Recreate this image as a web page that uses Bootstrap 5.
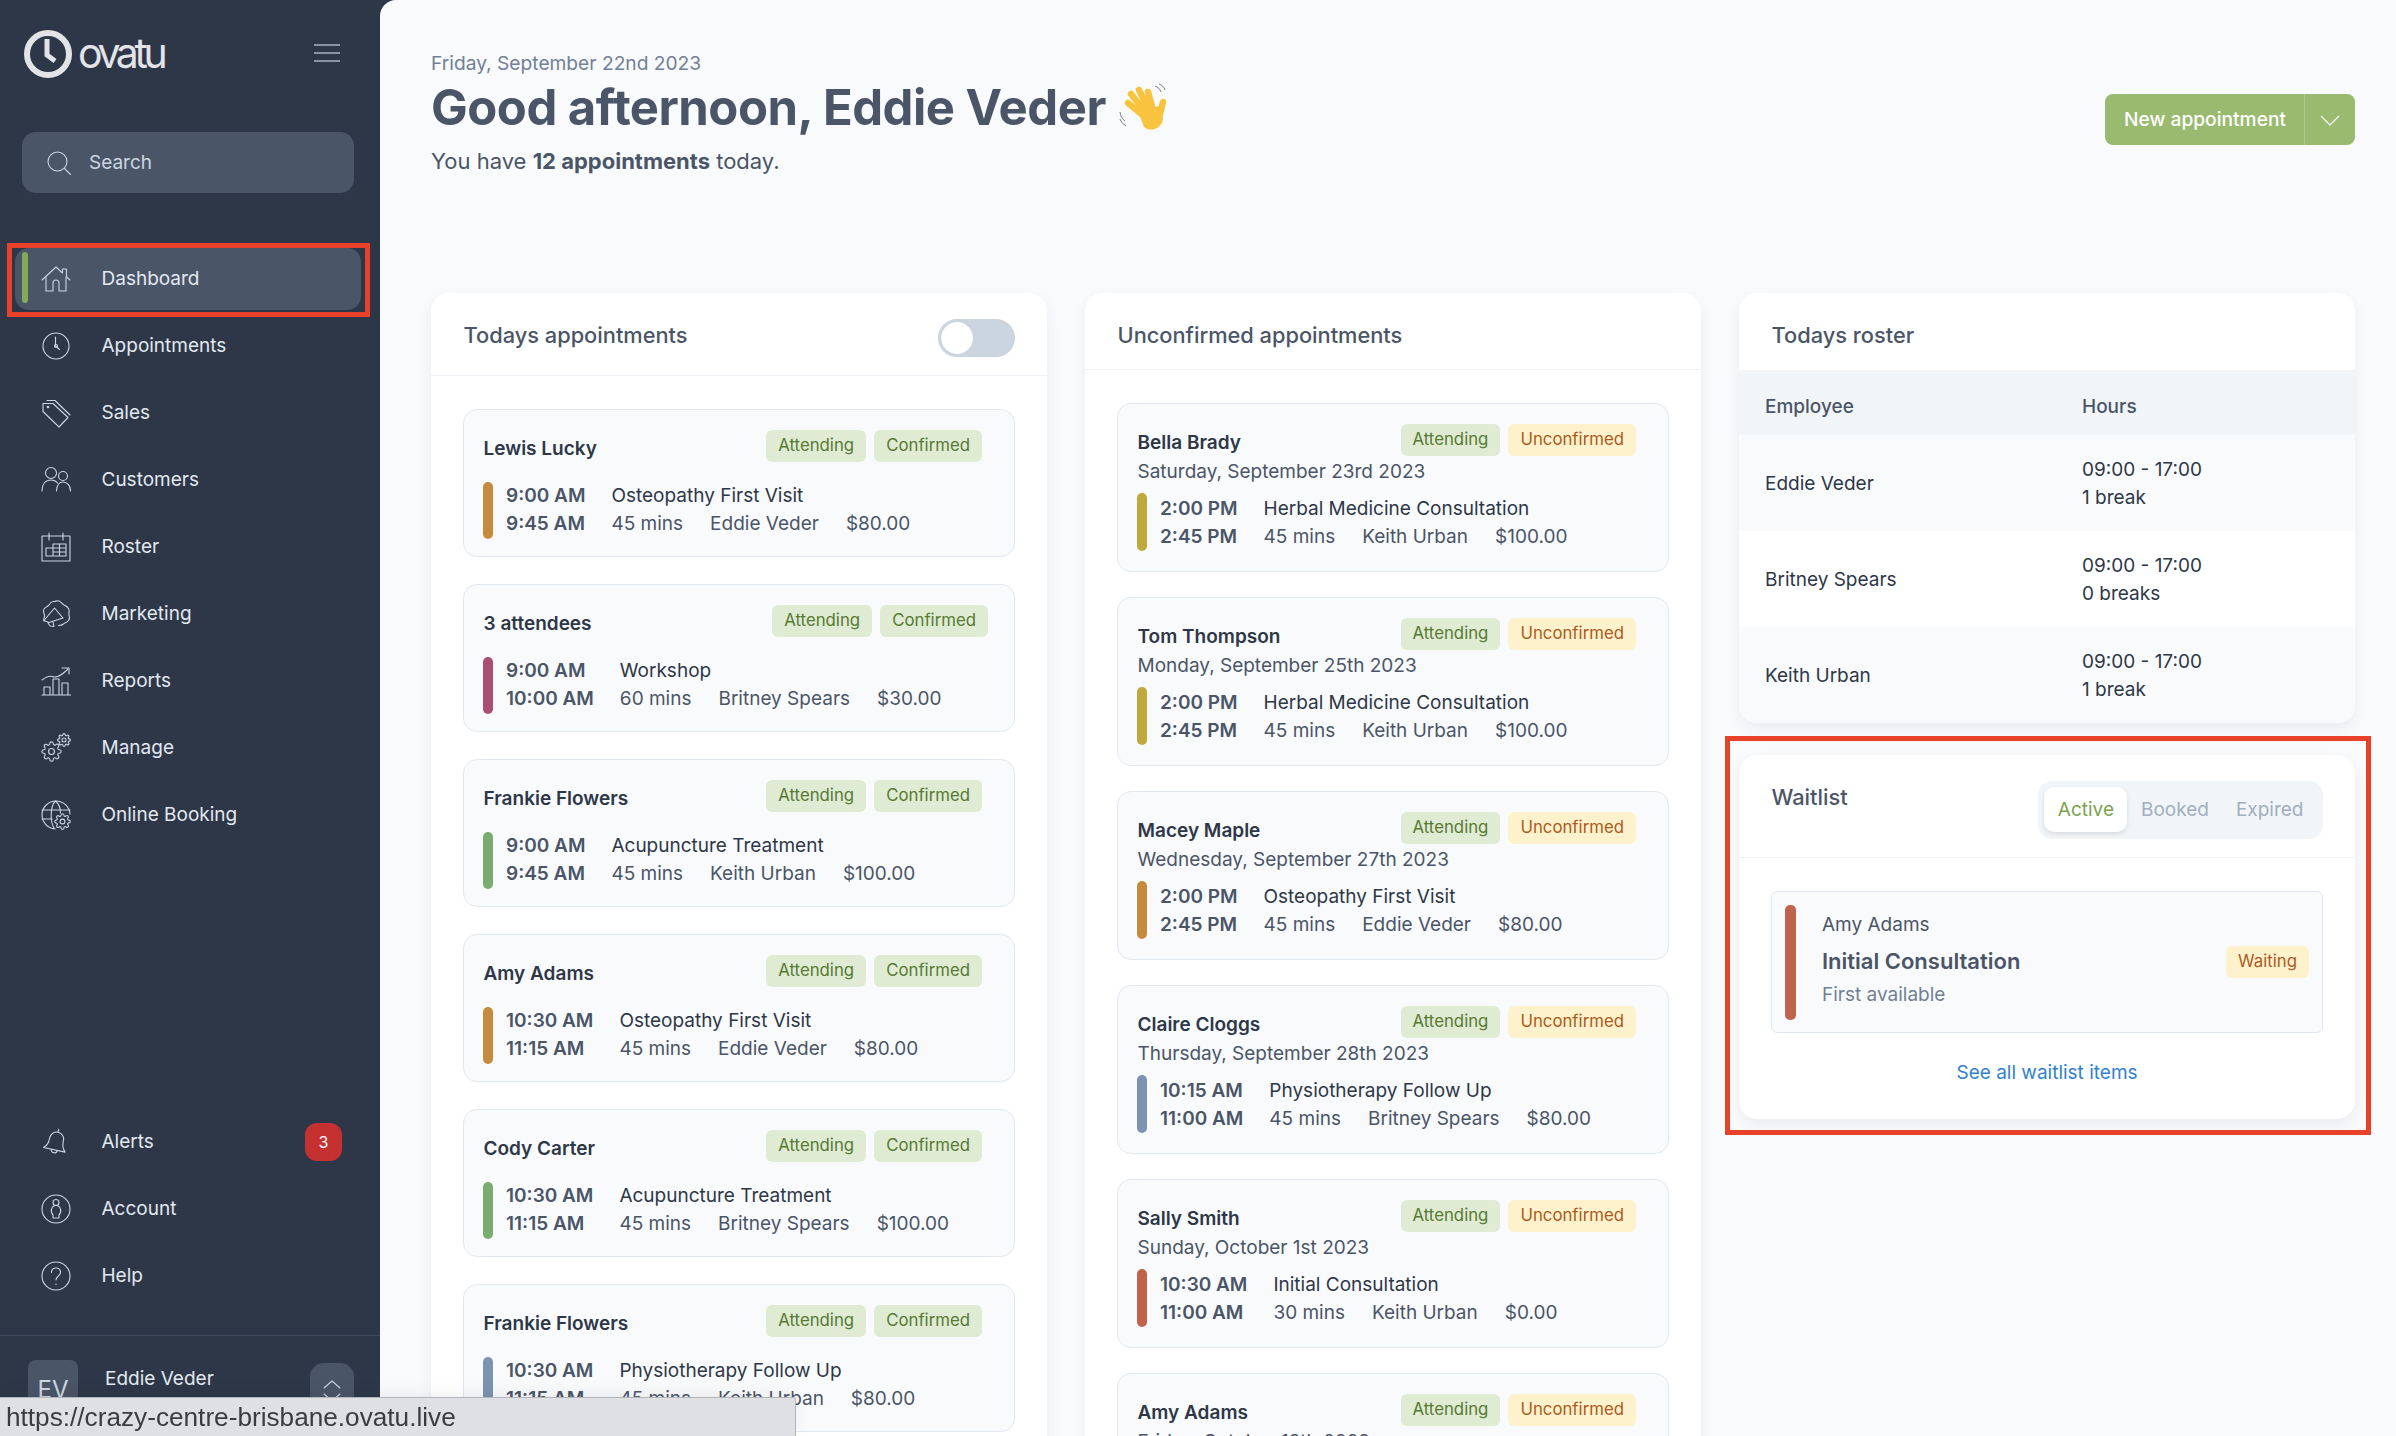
<!DOCTYPE html>
<html lang="en">
<head>
  <meta charset="UTF-8">
  <title>Dashboard – Ovatu</title>
  <meta name="viewport" content="width=device-width, initial-scale=1" />
  <link href="https://cdn.jsdelivr.net/npm/bootstrap@5.3.0/dist/css/bootstrap.min.css" rel="stylesheet" />
  <style>
    html, body { height: 100%; overflow: hidden; }
    body {
      background-color: #2d3748;
      font-family: Inter, "Liberation Sans", sans-serif;
      font-size: 19px;
      color: #4a5568;
    }

    .app-shell { height: 1436px; }

    /* sidebar */
    .side-bar { width: 380px; flex: 0 0 380px; color: #e2e8f0; padding: 0 0 0 15px; }
    .logo-row { height: 132px; padding: 30px 40px 0 9px; align-items: flex-start; }
    .logo-word { font-size: 41px; line-height: 46px; letter-spacing: -4.4px; color: #e2e4e8; margin-left: 6px; margin-top: 0; }
    .burger { margin-top: 14px; }
    .search-box { margin: 0 26px 0 7px; height: 61px; background: #4a5568; border-radius: 14px; padding-left: 25px; color: #cbd5e0; }
    .search-box span { margin-left: 18px; padding-top: 1px; }
    .side-list { margin-top: 55px; }
    .side-link { position: relative; height: 62px; margin: 0 19px 5px 0; padding-left: 26px; border-radius: 14px; color: #e2e8f0; text-decoration: none; }
    .side-link.is-on { background: #4a5568; }
    .side-link.is-on::before { content: ""; position: absolute; left: 7px; top: 4px; bottom: 7px; width: 6px; border-radius: 3px; background: #84a957; }
    .side-link svg { width: 30px; height: 30px; flex: none; margin-right: 30.5px; }
    .ico { fill: none; stroke: #cbd5e0; stroke-width: 1.1; stroke-linecap: round; stroke-linejoin: round; }
    .alert-pill { margin-left: auto; margin-right: 19px; width: 37px; height: 38px; border-radius: 12px; background: #c53030; color: #fff; font-size: 16px; }
    .side-foot { margin-left: -15px; margin-top: 23px; border-top: 1px solid #3f4a5c; padding: 24px 26px 13px 28px; }
    .avatar-box { width: 50px; height: 60px; background: #4a5568; border-radius: 8px; font-size: 24px; color: #cbd5e0; padding-top: 12px; text-align: center; }
    .user-name { margin-left: 27px; margin-top: 5px; }
    .user-switch { margin-left: auto; margin-top: 3px; width: 44px; height: 60px; background: #4a5568; border-radius: 14px; padding-top: 13px; }

    /* main */
    .main-area { flex: 1 1 auto; min-width: 0; background: #f9fafc; border-top-left-radius: 16px; padding: 50px 41px 0 51px; }
    .page-date { font-size: 19.2px; line-height: 26px; color: #718096; }
    .page-title { font-size: 49px; line-height: 62px; font-weight: 700; color: #4a5568; margin: 1px 0 -1px; letter-spacing: -.5px; }
    .wave-hand { margin-left: 12px; }
    .page-sub { font-size: 22px; line-height: 30px; margin-top: 8px; }
    .page-sub b { font-weight: 700; }
    .new-btn { background: #9abb6f; border: 0; color: #fff; font-size: 19.2px; height: 51px; border-radius: 8px; padding: 0; width: 200px; font-weight: 500; }
    .new-btn:hover, .new-btn:focus { background: #8aae5c; color: #fff; }
    .new-btn-caret { border-left: 1px solid #afc98e; width: 51px; }
    .head-row { height: 243px; }
    .head-action { margin-top: 44px; }

    .cols { gap: 38px; }
    .cols > * { width: 616px; flex: none; }
    .panel { background: #fff; border-radius: 18px; box-shadow: 0 6px 14px rgba(45,55,72,.07); }
    .panel-head { padding: 0 32.5px; height: 77px; font-size: 21.8px; font-weight: 500; border-bottom: 1px solid #edf2f7; padding-top: 25px; line-height: 34px; }
    .panel-head.with-toggle { height: 83px; }
    .panel-head.no-line { border-bottom: 0; }
    .panel-body { padding: 33px 32px; }
    .day-toggle.form-check-input { width: 77px; height: 38px; margin: 1px 0 0 0; background-color: #cbd5e0; border: 3px solid #cbd5e0; background-image: url("data:image/svg+xml,%3csvg xmlns='http://www.w3.org/2000/svg' viewBox='-4 -4 8 8'%3e%3ccircle r='4' fill='%23fff'/%3e%3c/svg%3e"); float: none; }

    .appt { background: #f9fafc; border: 1px solid #e2e8f0; border-radius: 14px; padding: 20px 32px 18px 19.5px; height: 148px; margin-bottom: 27px; }
    .appt.has-date { height: 169px; margin-bottom: 25px; }
    .appt-name { font-weight: 600; color: #2d3748; line-height: 28px; margin-top: 5px; }
    .appt-date { line-height: 28px; margin-top: 1px; }
    .tag-row { display: flex; gap: 8px; }
    .tag-pill { display: inline-block; height: 32px; line-height: 31px; padding: 0 12px; border-radius: 6px; font-size: 16.8px; }
    .tag-green { background: #e0ebd3; color: #577a33; }
    .tag-amber { background: #fdf2cc; color: #ad5a21; }
    .appt-tags-wide { margin-right: -6px; }
    .appt-line { margin-top: 19px; margin-left: -.5px; }
    .has-date .appt-line { margin-top: 7px; }
    .time-bar { width: 10px; height: 57px; border-radius: 5px; margin-right: 13px; flex: none; }
    .has-date .time-bar { height: 58px; }
    .bar-orange { background: #c58a3e; }
    .bar-plum { background: #a94f72; }
    .bar-green { background: #7aac70; }
    .bar-slate { background: #7c93b2; }
    .bar-mustard { background: #bfa93a; }
    .bar-terra { background: #c0634a; }
    .bar-rust { background: #c0654d; }
    .time-col { font-weight: 600; line-height: 28px; margin-right: 26px; white-space: nowrap; }
    .info-col { line-height: 28px; white-space: nowrap; color: #4a5568; }
    .has-date .time-col, .has-date .info-col { padding-top: 2px; }
    .info-title { color: #2d3748; }
    .info-col span + span { margin-left: 27px; }

    .roster-table { margin: 0; font-size: 19px; }
    .roster-table th, .roster-table td { padding: 0 0 0 26px; vertical-align: middle; border: 0; color: #2d3748; background: transparent; line-height: 28px; }
    .roster-table th { height: 65px; padding-top: 9px; background: #f2f5f8; font-weight: 500; color: #4a5568; }
    .roster-table td { height: 96px; padding-top: 2px; }
    .roster-table tbody tr:nth-child(odd) td { background: #f9fafc; }
    .roster-table .first-col { width: 317px; }
    .panel-clip { overflow: hidden; }

    .wait-panel { margin-top: 32px; }
    .wait-head { height: 103px; padding: 25px 32px 0 32.5px; border-bottom: 1px solid #edf2f7; font-size: 21.8px; font-weight: 500; }
    .wait-title { line-height: 34px; }
    .wait-tabs { height: 58px; background: #f2f5f8; border-radius: 14px; padding: 6px; margin-top: 1px; font-size: 19px; font-weight: 400; }
    .wait-tab { height: 45px; line-height: 45px; padding: 0 13.5px; border-radius: 10px; color: #a0aec0; text-decoration: none; }
    .wait-tab.is-on { background: #fff; color: #7ba34f; box-shadow: 0 2px 4px rgba(45,55,72,.14); }
    .wait-item { background: #f9fafc; border: 1px solid #e2e8f0; border-radius: 6px; height: 142px; padding: 13px; }
    .wait-bar { width: 11px; height: 115px; border-radius: 5px; margin-right: 26px; flex: none; }
    .wait-who { line-height: 28px; margin-top: 6px; }
    .wait-what { font-size: 22px; font-weight: 600; line-height: 30px; margin-top: 7px; }
    .wait-when { color: #718096; line-height: 28px; margin-top: 5px; }
    .wait-link { display: block; text-align: center; color: #3182ce; text-decoration: none; margin-top: 26px; padding-bottom: 32px; line-height: 28px; }

    /* overlays */
    .note-box { position: absolute; border: 5px solid #e8412a; pointer-events: none; }
    .note-dash { left: -8px; right: -9px; top: -5px; bottom: -7px; }
    .note-wait { left: -14px; right: -16px; top: -19px; bottom: -16px; }
    .url-tip { position: fixed; left: 0; bottom: 0; width: 796px; height: 39px; background: #dfe0e4; border-top: 1px solid #b4b5b8; border-right: 1px solid #b4b5b8; border-top-right-radius: 3px; font-family: "Liberation Sans", sans-serif; font-size: 26.2px; line-height: 38px; color: #3c3c3e; padding-left: 6px; box-shadow: 0 -4px 16px rgba(0,0,0,.06); }
  </style>
</head>
<body>
<svg width="0" height="0" class="position-absolute">
  <symbol id="gear" viewBox="0 0 24 24">
    <path d="M19.4 15a1.65 1.65 0 0 0 .33 1.82l.06.06a2 2 0 0 1 0 2.83 2 2 0 0 1-2.83 0l-.06-.06a1.65 1.65 0 0 0-1.82-.33 1.65 1.65 0 0 0-1 1.51V21a2 2 0 0 1-2 2 2 2 0 0 1-2-2v-.09A1.65 1.65 0 0 0 9 19.4a1.65 1.65 0 0 0-1.82.33l-.06.06a2 2 0 0 1-2.83 0 2 2 0 0 1 0-2.83l.06-.06a1.65 1.65 0 0 0 .33-1.82 1.65 1.65 0 0 0-1.51-1H3a2 2 0 0 1-2-2 2 2 0 0 1 2-2h.09A1.65 1.65 0 0 0 4.6 9a1.65 1.65 0 0 0-.33-1.82l-.06-.06a2 2 0 0 1 0-2.83 2 2 0 0 1 2.83 0l.06.06a1.65 1.65 0 0 0 1.82.33H9a1.65 1.65 0 0 0 1-1.51V3a2 2 0 0 1 2-2 2 2 0 0 1 2 2v.09a1.65 1.65 0 0 0 1 1.51 1.65 1.65 0 0 0 1.82-.33l.06-.06a2 2 0 0 1 2.83 0 2 2 0 0 1 0 2.83l-.06.06a1.65 1.65 0 0 0-.33 1.82V9a1.65 1.65 0 0 0 1.51 1H21a2 2 0 0 1 2 2 2 2 0 0 1-2 2h-.09a1.65 1.65 0 0 0-1.51 1z" vector-effect="non-scaling-stroke"/>
    <circle cx="12" cy="12" r="3.4" vector-effect="non-scaling-stroke"/>
  </symbol>
</svg>

<div class="app-shell d-flex">
  <aside class="side-bar d-flex flex-column">
    <div class="logo-row d-flex">
      <svg width="48" height="48" viewBox="0 0 48 48" fill="none" stroke="#e2e4e8">
        <circle cx="24" cy="24" r="21" stroke-width="6"/>
        <path d="M23 9v16l8 6" stroke-width="5" stroke-linejoin="miter"/>
      </svg>
      <span class="logo-word">ovatu</span>
      <svg class="burger ms-auto" width="26" height="18" viewBox="0 0 26 18" stroke="#a9b2c0" stroke-width="1.5"><path d="M0 1h26M0 9h26M0 17h26"/></svg>
    </div>

    <div class="search-box d-flex align-items-center">
      <svg width="24" height="24" viewBox="0 0 24 24" class="ico"><circle cx="10.5" cy="10.5" r="9.5"/><path d="M17.5 17.5l6 6"/></svg>
      <span>Search</span>
    </div>

    <nav class="side-list">
      <a class="side-link is-on d-flex align-items-center" href="#">
        <svg viewBox="0 0 30 30" class="ico"><path d="M1 16L15 3l6.500 6V5h4v8l3.500 3"/><path d="M5 13v14h7v-8c0-4 6-4 6 0v8h7V13"/></svg>
        Dashboard
        <span class="note-box note-dash"></span>
      </a>
      <a class="side-link d-flex align-items-center" href="#">
        <svg viewBox="0 0 30 30" class="ico"><circle cx="15" cy="15" r="13"/><path d="M14.500 6v9l4 3.500"/><circle cx="15" cy="15" r="1.500"/></svg>
        Appointments
      </a>
      <a class="side-link d-flex align-items-center" href="#">
        <svg viewBox="0 0 30 30" class="ico"><path d="M2 5.500h10L27 19.500 18 29 2 13.500z"/><path d="M6 2.500h8L29 17"/><circle cx="7" cy="9" r=".8"/></svg>
        Sales
      </a>
      <a class="side-link d-flex align-items-center" href="#">
        <svg viewBox="0 0 30 30" class="ico"><circle cx="10" cy="8" r="5.500"/><circle cx="22" cy="11" r="4.500"/><path d="M1 26c0-7 3.500-11 9-11 3 0 5 1 6.500 3"/><path d="M15.500 26c.3-5.500 2.500-9 6.500-9s7.500 3.500 7.500 9"/></svg>
        Customers
      </a>
      <a class="side-link d-flex align-items-center" href="#">
        <svg viewBox="0 0 30 30" class="ico"><rect x="1" y="4" width="28" height="25"/><path d="M8 1v7M22 1v7"/><path d="M12 12h13v8H12zM5 16h20M5 16v8h20v-12M12 12v12M18.500 12v12"/></svg>
        Roster
      </a>
      <a class="side-link d-flex align-items-center" href="#">
        <svg viewBox="0 0 30 30" class="ico"><path d="M3 22C2 20 4 18 3.500 16S1.500 12 3 10s3-2 4.500-3.500S10 2 12.500 2.500 15.500 1 18 2s3 3 5 4 4.500 2 5 4.500-.5 3.500 0 5.500 1.500 3-.5 5.500-3.500 2-5 3.500-3 1.500-5 1.500"/><path d="M13.500 9l8.500 10-14 4.500-5-2zM7 24l2 3 4 .5-1-4.500"/></svg>
        Marketing
      </a>
      <a class="side-link d-flex align-items-center" href="#">
        <svg viewBox="0 0 30 30" class="ico"><path d="M1 29h29M3 29v-8h6v8M12 29V13h6v16M21 29V17h6v12"/><path d="M1 14c4-3 7-4.500 10-3.500s7 1.500 16-7.500"/><path d="M21 2h7v6"/></svg>
        Reports
      </a>
      <a class="side-link d-flex align-items-center" href="#">
        <svg viewBox="0 0 30 30" class="ico"><use href="#gear" x="0" y="8" width="21" height="21"/><use href="#gear" x="16" y="0" width="14" height="14"/></svg>
        Manage
      </a>
      <a class="side-link d-flex align-items-center" href="#">
        <svg viewBox="0 0 30 30" class="ico"><path d="M14 28.900A14 14 0 1 1 29 14"/><path d="M1 10h28M1 19h10M14.500 1C9 6 9 22 13 28M14.500 1C18 4 19.500 9 19.500 13"/><use href="#gear" x="13" y="13" width="17" height="17"/></svg>
        Online Booking
      </a>
    </nav>

    <nav class="side-list mt-auto">
      <a class="side-link d-flex align-items-center" href="#">
        <svg viewBox="0 0 30 30" class="ico"><g transform="rotate(12 15 15)"><path d="M4 23c3-3 4-5 4-11a7 7 0 0 1 14 0c0 6 1 8 4 11z"/><path d="M15 5V2M12 23c0 4 6 4 6 0"/></g></svg>
        Alerts
        <span class="alert-pill d-flex align-items-center justify-content-center">3</span>
      </a>
      <a class="side-link d-flex align-items-center" href="#">
        <svg viewBox="0 0 30 30" class="ico"><circle cx="15" cy="15" r="14"/><circle cx="15" cy="8.500" r="3"/><path d="M12 24v-3c-3-3-2-9.500 3-9.500s6 6.500 3 9.500v3z"/></svg>
        Account
      </a>
      <a class="side-link d-flex align-items-center" href="#">
        <svg viewBox="0 0 30 30" class="ico"><circle cx="15" cy="15" r="14"/><path d="M10.500 11.500c0-6 9-6 9 0 0 3.500-4.500 3.500-4.500 7.500M15 23v.6"/></svg>
        Help
      </a>
    </nav>

    <div class="side-foot d-flex">
      <div class="avatar-box">EV</div>
      <div class="user-name">Eddie Veder</div>
      <div class="user-switch text-center">
        <svg width="18" height="24" viewBox="0 0 18 24" class="ico"><path d="M1 9l8-7 8 7M1 15l8 7 8-7"/></svg>
      </div>
    </div>
  </aside>

  <main class="main-area">
    <div class="head-row d-flex justify-content-between align-items-start">
      <div>
        <div class="page-date">Friday, September 22nd 2023</div>
        <h1 class="page-title d-flex align-items-center">Good afternoon, Eddie Veder
          <svg class="wave-hand" width="50" height="50" viewBox="0 0 50 50">
            <g fill="none" stroke="#f8c440" stroke-linecap="round" stroke-width="6.500">
              <path d="M27 34L10 20M28 30L13 11M31 27L21 7M35 27L30 9M41 35L45 19"/>
            </g>
            <path d="M20 28L41 23 45 36C44 45 33 50 26 44z" fill="#f8c440"/>
            <path d="M37 3c3 1 5 3 6 6M41 1c3 1 5 3 6 6M2 29c.5 4 2 7 5 9M2 36c1 3 3 5 6 7" fill="none" stroke="#7a7f88" stroke-width="1"/>
          </svg>
        </h1>
        <div class="page-sub">You have <b>12 appointments</b> today.</div>
      </div>
      <div class="btn-group head-action">
        <button type="button" class="btn new-btn">New appointment</button>
        <button type="button" class="btn new-btn new-btn-caret">
          <svg width="20" height="11" viewBox="0 0 20 11" fill="none" stroke="#fff" stroke-width="1.100"><path d="M1 1l9 9 9-9"/></svg>
        </button>
      </div>
    </div>

    <div class="cols d-flex align-items-start">
      <section class="panel">
        <div class="panel-head with-toggle d-flex justify-content-between">
          <span>Todays appointments</span>
          <div class="form-check form-switch p-0 m-0">
            <input class="form-check-input day-toggle" type="checkbox" role="switch" aria-label="Show all">
          </div>
        </div>
        <div class="panel-body" id="today-list"></div>
      </section>

      <section class="panel">
        <div class="panel-head">Unconfirmed appointments</div>
        <div class="panel-body" id="unconfirmed-list"></div>
      </section>

      <div>
        <section class="panel panel-clip">
          <div class="panel-head no-line">Todays roster</div>
          <table class="table roster-table">
            <thead><tr><th class="first-col">Employee</th><th>Hours</th></tr></thead>
            <tbody>
              <tr><td>Eddie Veder</td><td>09:00 - 17:00<br>1 break</td></tr>
              <tr><td>Britney Spears</td><td>09:00 - 17:00<br>0 breaks</td></tr>
              <tr><td>Keith Urban</td><td>09:00 - 17:00<br>1 break</td></tr>
            </tbody>
          </table>
        </section>

        <section class="panel wait-panel position-relative">
          <span class="note-box note-wait"></span>
          <div class="wait-head d-flex justify-content-between">
            <span class="wait-title">Waitlist</span>
            <div class="wait-tabs d-flex">
              <a class="wait-tab is-on" href="#">Active</a>
              <a class="wait-tab" href="#">Booked</a>
              <a class="wait-tab" href="#">Expired</a>
            </div>
          </div>
          <div class="panel-body pb-0">
            <div class="wait-item d-flex">
              <div class="wait-bar bar-rust"></div>
              <div class="flex-grow-1">
                <div class="wait-who">Amy Adams</div>
                <div class="wait-what">Initial Consultation</div>
                <div class="wait-when">First available</div>
              </div>
              <div class="align-self-center"><span class="tag-pill tag-amber">Waiting</span></div>
            </div>
            <a class="wait-link" href="#">See all waitlist items</a>
          </div>
        </section>
      </div>
    </div>
  </main>
</div>

<div class="url-tip">https://crazy-centre-brisbane.ovatu.live</div>

<script src="https://cdn.jsdelivr.net/npm/bootstrap@5.3.0/dist/js/bootstrap.bundle.min.js"></script>
<script>
  const today = [
    { name: "Lewis Lucky", from: "9:00 AM", to: "9:45 AM", title: "Osteopathy First Visit", mins: 45, who: "Eddie Veder", price: "$80.00", bar: "orange" },
    { name: "3 attendees", from: "9:00 AM", to: "10:00 AM", title: "Workshop", mins: 60, who: "Britney Spears", price: "$30.00", bar: "plum", wide: true },
    { name: "Frankie Flowers", from: "9:00 AM", to: "9:45 AM", title: "Acupuncture Treatment", mins: 45, who: "Keith Urban", price: "$100.00", bar: "green" },
    { name: "Amy Adams", from: "10:30 AM", to: "11:15 AM", title: "Osteopathy First Visit", mins: 45, who: "Eddie Veder", price: "$80.00", bar: "orange" },
    { name: "Cody Carter", from: "10:30 AM", to: "11:15 AM", title: "Acupuncture Treatment", mins: 45, who: "Britney Spears", price: "$100.00", bar: "green" },
    { name: "Frankie Flowers", from: "10:30 AM", to: "11:15 AM", title: "Physiotherapy Follow Up", mins: 45, who: "Keith Urban", price: "$80.00", bar: "slate" }
  ];

  const unconfirmed = [
    { name: "Bella Brady", date: "Saturday, September 23rd 2023", from: "2:00 PM", to: "2:45 PM", title: "Herbal Medicine Consultation", mins: 45, who: "Keith Urban", price: "$100.00", bar: "mustard" },
    { name: "Tom Thompson", date: "Monday, September 25th 2023", from: "2:00 PM", to: "2:45 PM", title: "Herbal Medicine Consultation", mins: 45, who: "Keith Urban", price: "$100.00", bar: "mustard" },
    { name: "Macey Maple", date: "Wednesday, September 27th 2023", from: "2:00 PM", to: "2:45 PM", title: "Osteopathy First Visit", mins: 45, who: "Eddie Veder", price: "$80.00", bar: "orange" },
    { name: "Claire Cloggs", date: "Thursday, September 28th 2023", from: "10:15 AM", to: "11:00 AM", title: "Physiotherapy Follow Up", mins: 45, who: "Britney Spears", price: "$80.00", bar: "slate" },
    { name: "Sally Smith", date: "Sunday, October 1st 2023", from: "10:30 AM", to: "11:00 AM", title: "Initial Consultation", mins: 30, who: "Keith Urban", price: "$0.00", bar: "terra" },
    { name: "Amy Adams", date: "Friday, October 13th 2023", from: "10:30 AM", to: "11:00 AM", title: "Initial Consultation", mins: 30, who: "Keith Urban", price: "$0.00", bar: "terra" }
  ];

  function apptCard(a) {
    const status = a.date
      ? '<span class="tag-pill tag-amber">Unconfirmed</span>'
      : '<span class="tag-pill tag-green">Confirmed</span>';
    return `
      <div class="appt ${a.date ? "has-date" : ""}">
        <div class="d-flex justify-content-between align-items-start">
          <div class="appt-name">${a.name}</div>
          <div class="tag-row ${a.wide ? "appt-tags-wide" : ""}"><span class="tag-pill tag-green">Attending</span>${status}</div>
        </div>
        ${a.date ? `<div class="appt-date">${a.date}</div>` : ""}
        <div class="appt-line d-flex">
          <div class="time-bar bar-${a.bar}"></div>
          <div class="time-col">${a.from}<br>${a.to}</div>
          <div class="info-col">
            <div class="info-title">${a.title}</div>
            <div><span>${a.mins} mins</span><span>${a.who}</span><span>${a.price}</span></div>
          </div>
        </div>
      </div>`;
  }

  document.getElementById("today-list").innerHTML = today.map(apptCard).join("");
  document.getElementById("unconfirmed-list").innerHTML = unconfirmed.map(apptCard).join("");
</script>
</body>
</html>
